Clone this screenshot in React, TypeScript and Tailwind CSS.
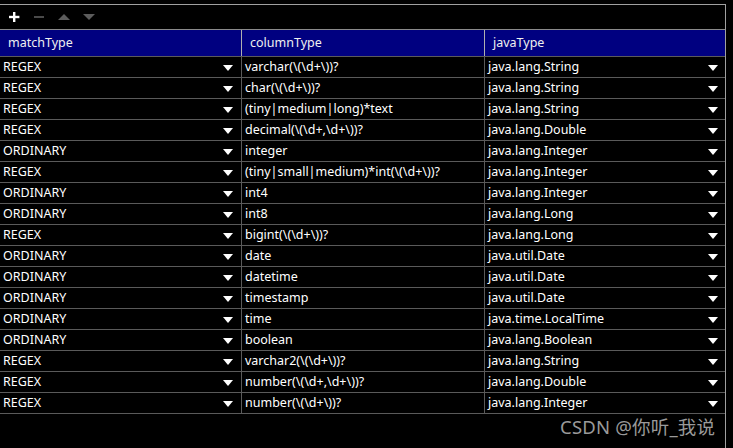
import React from "react";

const rows: [string, string, string][] = [
  ["REGEX", "varchar(\\(\\d+\\))?", "java.lang.String"],
  ["REGEX", "char(\\(\\d+\\))?", "java.lang.String"],
  ["REGEX", "(tiny|medium|long)*text", "java.lang.String"],
  ["REGEX", "decimal(\\(\\d+,\\d+\\))?", "java.lang.Double"],
  ["ORDINARY", "integer", "java.lang.Integer"],
  ["REGEX", "(tiny|small|medium)*int(\\(\\d+\\))?", "java.lang.Integer"],
  ["ORDINARY", "int4", "java.lang.Integer"],
  ["ORDINARY", "int8", "java.lang.Long"],
  ["REGEX", "bigint(\\(\\d+\\))?", "java.lang.Long"],
  ["ORDINARY", "date", "java.util.Date"],
  ["ORDINARY", "datetime", "java.util.Date"],
  ["ORDINARY", "timestamp", "java.util.Date"],
  ["ORDINARY", "time", "java.time.LocalTime"],
  ["ORDINARY", "boolean", "java.lang.Boolean"],
  ["REGEX", "varchar2(\\(\\d+\\))?", "java.lang.String"],
  ["REGEX", "number(\\(\\d+,\\d+\\))?", "java.lang.Double"],
  ["REGEX", "number(\\(\\d+\\))?", "java.lang.Integer"],
];

function Caret() {
  return (
    <svg width="10" height="6" viewBox="0 0 10 6" className="shrink-0">
      <polygon points="0,0 10,0 5,6" fill="#ffffff" />
    </svg>
  );
}

export default function App() {
  return (
    <div
      className="relative w-[733px] h-[448px] overflow-hidden bg-black text-white"
      style={{ fontFamily: '"Noto Sans", "Noto Sans CJK SC", sans-serif' }}
    >
      <div className="mt-[4px] w-[726px] h-[444px] border-t border-r border-[#a0a0a0] flex flex-col">
        {/* toolbar */}
        <div className="h-[24px] flex items-center gap-[13px] pl-[8px] shrink-0">
          <svg width="12" height="12" viewBox="0 0 12 12">
            <rect x="5" y="1" width="2.4" height="10" fill="#fff" />
            <rect x="1" y="4.8" width="10.4" height="2.4" fill="#fff" />
          </svg>
          <svg width="12" height="12" viewBox="0 0 12 12">
            <rect x="1" y="5" width="10" height="2" fill="#4a4a4a" />
          </svg>
          <svg width="12" height="12" viewBox="0 0 12 12">
            <polygon points="0,9 12,9 6,3" fill="#5c5c5c" />
          </svg>
          <svg width="12" height="12" viewBox="0 0 12 12">
            <polygon points="0,3 12,3 6,9" fill="#5c5c5c" />
          </svg>
        </div>

        {/* header */}
        <div className="grid grid-cols-[242px_243px_240px] h-[28px] shrink-0 bg-[#000080] border-t border-[#8a8a8a] border-b border-b-[#5a5a5a] text-[12.5px] text-[#f0f0f0]">
          <div className="border-r border-[#b0b0b0] pl-[8px] pt-[1px] flex items-center">matchType</div>
          <div className="border-r border-[#b0b0b0] pl-[8px] pt-[1px] flex items-center">columnType</div>
          <div className="pl-[8px] pt-[1px] flex items-center">javaType</div>
        </div>

        {/* rows */}
        {rows.map((r, i) => (
          <div
            key={i}
            className="grid grid-cols-[242px_243px_240px] h-[21px] shrink-0 border-b border-[#5a5a5a] text-[12.5px] leading-none"
          >
            <div className="border-r border-[#5a5a5a] pl-[3px] pr-[8px] pt-[1px] flex items-center justify-between">
              <span>{r[0]}</span>
              <Caret />
            </div>
            <div className="border-r border-[#5a5a5a] pl-[3px] pt-[1px] flex items-center whitespace-nowrap">
              {r[1]}
            </div>
            <div className="pl-[3px] pr-[7px] pt-[1px] flex items-center justify-between">
              <span>{r[2]}</span>
              <Caret />
            </div>
          </div>
        ))}
      </div>

      <div className="absolute left-[560px] top-[413px] text-[18.5px] tracking-[0.2px] text-[#9a9a9a] whitespace-nowrap">
        CSDN @你听_我说
      </div>
    </div>
  );
}
